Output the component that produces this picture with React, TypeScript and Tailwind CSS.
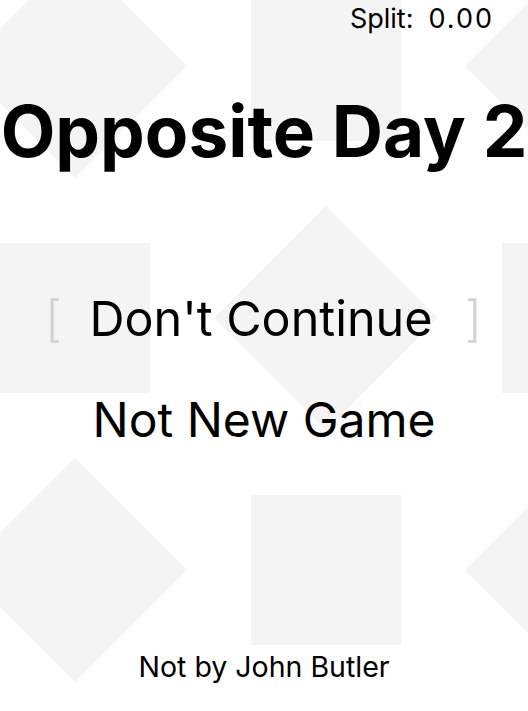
import React from "react";

const SHAPE = "#f4f4f4";
const COLS = [75, 326, 577];
const ROWS = [66, 318, 570];

function Backdrop() {
  return (
    <svg className="absolute inset-0 h-full w-full" width="528" height="711" aria-hidden="true">
      {ROWS.map((cy, r) =>
        COLS.map((cx, c) =>
          (r + c) % 2 === 0 ? (
            <polygon
              key={`${r}-${c}`}
              points={`${cx},${cy - 112} ${cx + 112},${cy} ${cx},${cy + 112} ${cx - 112},${cy}`}
              fill={SHAPE}
            />
          ) : (
            <rect key={`${r}-${c}`} x={cx - 75} y={cy - 75} width="150" height="150" fill={SHAPE} />
          )
        )
      )}
    </svg>
  );
}

export default function App() {
  return (
    <div
      className="relative h-[711px] w-[528px] overflow-hidden bg-white text-black"
      style={{ fontFamily: "Inter, 'Noto Sans', sans-serif" }}
    >
      <Backdrop />

      <div className="relative flex flex-col items-center">
        {/* Split timer */}
        <div className="mt-[5px] flex w-full justify-end gap-[15px] pr-[34px] text-[27px] leading-none">
          <span>Split:</span>
          <span className="tracking-[2px]">0.00</span>
        </div>

        {/* Title */}
        <h1 className="mt-[64px] whitespace-nowrap text-[71px] font-bold leading-none">Opposite Day 2</h1>

        {/* Menu */}
        <div className="mt-[128px] flex w-[438px] items-center text-[48.5px] leading-none">
          <span className="w-[12px] font-light text-[#d2d2d2]">[</span>
          <span className="flex-1 text-center">Don't Continue</span>
          <span className="mr-[6px] w-[12px] font-light text-[#d2d2d2]">]</span>
        </div>
        <div className="mt-[52px] text-[48px] leading-none">Not New Game</div>

        {/* Footer */}
        <div className="mt-[209px] text-[28.5px] leading-none">Not by John Butler</div>
      </div>
    </div>
  );
}
